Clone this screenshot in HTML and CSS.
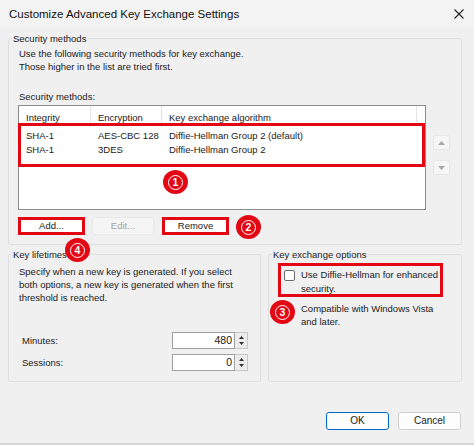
FILE: index.html
```html
<!DOCTYPE html>
<html lang="en">
<head>
    <meta charset="UTF-8">
    <title>Customize Advanced Key Exchange Settings</title>
    <link rel="stylesheet" href="styles.css">
</head>
<body>
    <div class="window">
        <div class="titlebar">
            <span class="title">Customize Advanced Key Exchange Settings</span>
            <svg class="close" width="10" height="10" viewBox="0 0 10 10">
                <path d="M0.5 0.5 L9.5 9.5 M9.5 0.5 L0.5 9.5" stroke="#222" stroke-width="1.1" fill="none"/>
            </svg>
        </div>
        <div class="content">
            <fieldset class="group group-methods">
                <legend>Security methods</legend>
                <div class="inner">
                    <p class="desc">Use the following security methods for key exchange.<br>Those higher in the list are tried first.</p>
                    <div class="list-label">Security methods:</div>
                    <div class="list-row">
                        <div class="list">
                            <div class="list-head">
                                <span class="col c1">Integrity</span>
                                <span class="col c2">Encryption</span>
                                <span class="col c3">Key exchange algorithm</span>
                            </div>
                            <div class="list-item">
                                <span class="col c1">SHA-1</span>
                                <span class="col c2">AES-CBC 128</span>
                                <span class="col c3">Diffie-Hellman Group 2 (default)</span>
                            </div>
                            <div class="list-item">
                                <span class="col c1">SHA-1</span>
                                <span class="col c2">3DES</span>
                                <span class="col c3">Diffie-Hellman Group 2</span>
                            </div>
                            <div class="mark-rows"></div>
                        </div>
                        <div class="movers">
                            <button class="mover">
                                <svg width="7" height="4" viewBox="0 0 7 4"><path d="M0 4 L3.5 0 L7 4 Z" fill="#a8a8a8"/></svg>
                            </button>
                            <button class="mover mover-down">
                                <svg width="7" height="4" viewBox="0 0 7 4"><path d="M0 0 L3.5 4 L7 0 Z" fill="#a8a8a8"/></svg>
                            </button>
                        </div>
                    </div>
                    <div class="actions">
                        <button class="btn marked btn-add">Add...</button>
                        <button class="btn btn-edit" disabled>Edit...</button>
                        <button class="btn marked btn-remove">Remove</button>
                    </div>
                </div>
            </fieldset>

            <div class="lower">
                <fieldset class="group group-life">
                    <legend>Key lifetimes</legend>
                    <div class="inner">
                        <p class="desc">Specify when a new key is generated. If you select<br>both options, a new key is generated when the first<br>threshold is reached.</p>
                        <div class="field">
                            <span class="field-label">Minutes:</span>
                            <div class="spin">
                                <span class="spin-value">480</span>
                                <span class="spin-btns">
                                    <svg width="5" height="3" viewBox="0 0 5 3"><path d="M0 3 L2.5 0 L5 3 Z" fill="#333"/></svg>
                                    <svg width="5" height="3" viewBox="0 0 5 3"><path d="M0 0 L2.5 3 L5 0 Z" fill="#333"/></svg>
                                </span>
                            </div>
                        </div>
                        <div class="field">
                            <span class="field-label">Sessions:</span>
                            <div class="spin">
                                <span class="spin-value">0</span>
                                <span class="spin-btns">
                                    <svg width="5" height="3" viewBox="0 0 5 3"><path d="M0 3 L2.5 0 L5 3 Z" fill="#333"/></svg>
                                    <svg width="5" height="3" viewBox="0 0 5 3"><path d="M0 0 L2.5 3 L5 0 Z" fill="#333"/></svg>
                                </span>
                            </div>
                        </div>
                    </div>
                </fieldset>

                <fieldset class="group group-options">
                    <legend>Key exchange options</legend>
                    <div class="inner">
                        <label class="check">
                            <span class="check-box"></span>
                            <span>Use Diffie-Hellman for enhanced<br>security.</span>
                        </label>
                        <p class="note">Compatible with Windows Vista<br>and later.</p>
                    </div>
                </fieldset>
            </div>

            <div class="footer">
                <button class="btn btn-ok">OK</button>
                <button class="btn btn-cancel">Cancel</button>
            </div>
        </div>

        <span class="badge badge-1"><span>1</span></span>
        <span class="badge badge-2"><span>2</span></span>
        <span class="badge badge-3"><span>3</span></span>
        <span class="badge badge-4"><span>4</span></span>
    </div>
</body>
</html>
```

FILE: styles.css
```css
body {
    margin: 0;
    font-family: 'Liberation Sans', Arial, sans-serif;
    font-size: 9.5px;
    color: #1a1a1a;
    background-color: #f0f0f0;
}

.window {
    position: relative;
    width: 474px;
    height: 445px;
    box-sizing: border-box;
    background-color: #f0f0f0;
    border-bottom: 2px solid #d6d6d6;
    overflow: hidden;
}

.titlebar {
    height: 28px;
    display: flex;
    align-items: center;
    justify-content: space-between;
    padding: 0 10px 0 9px;
    background-color: #f3f3f3;
}

.title {
    font-size: 11.5px;
    color: #111;
}

.close {
    display: block;
}

.content {
    padding: 0 12px 0 8px;
}

/* group boxes */
.group {
    margin: 0;
    padding: 0;
    border: 1px solid #dedede;
    border-radius: 2px;
    min-width: 0;
}

.group legend {
    margin-left: 3px;
    padding: 0 1px;
    line-height: 13px;
    color: #1a1a1a;
}

.desc,
.note {
    margin: 0;
    line-height: 13px;
}

.group-methods {
    margin-top: 4px;
}

.group-methods .inner {
    padding: 2px 0 9px 10px;
}

.list-label {
    margin-top: 17px;
    line-height: 13px;
}

.list-row {
    display: flex;
    align-items: flex-start;
    gap: 7px;
    margin-top: 2px;
    margin-left: -1px;
}

.list {
    position: relative;
    width: 408px;
    height: 105px;
    box-sizing: border-box;
    border: 1px solid #8c8c8c;
    background-color: #fff;
}

.list-head {
    display: flex;
    height: 21px;
    align-items: center;
}

.list-head .col {
    height: 21px;
    line-height: 23px;
    border-right: 1px solid #e5e5e5;
}

.list-item {
    display: flex;
    height: 14px;
    line-height: 14px;
}

.list-head + .list-item {
    margin-top: 2px;
}

.col {
    box-sizing: border-box;
    padding-left: 7px;
    white-space: nowrap;
}

.c1 { width: 72px; }
.c2 { width: 71px; }
.c3 { width: 255px; }

.mark-rows {
    position: absolute;
    left: -1px;
    top: 17px;
    width: 407px;
    height: 44px;
    box-sizing: border-box;
    border: 3.5px solid #e30613;
}

.movers {
    display: flex;
    flex-direction: column;
    gap: 10px;
    padding-top: 30px;
}

.mover {
    width: 17px;
    height: 15px;
    padding: 0;
    border: 1px solid #e6e6e6;
    border-radius: 2px;
    background-color: #f6f6f6;
    display: flex;
    align-items: center;
    justify-content: center;
}

.actions {
    display: flex;
    gap: 7px;
    margin-top: 7px;
    margin-left: -1px;
}

.btn {
    height: 18px;
    padding: 0;
    font-family: 'Liberation Sans', Arial, sans-serif;
    font-size: 9.5px;
    line-height: 12px;
    color: #1a1a1a;
    background-color: #fdfdfd;
    border: 1px solid #d0d0d0;
    border-radius: 3px;
}

.btn.marked {
    width: 67px;
    border: 3px solid #e30613;
    border-radius: 0;
    background-color: #fff;
}

.btn-edit {
    width: 62px;
    color: #a3a3a3;
    background-color: #f5f5f5;
    border-color: #e8e8e8;
}

.btn-remove {
    margin-left: 1px;
}

/* lower groups */
.lower {
    display: flex;
    gap: 7px;
    margin-top: 3px;
}

.group-life {
    width: 253px;
    box-sizing: border-box;
}

.group-life .inner {
    padding: 4px 12px 10px 10px;
}

.field {
    display: flex;
    align-items: center;
    justify-content: space-between;
    height: 17px;
    padding-left: 3px;
}

.field + .field {
    margin-top: 5px;
}

.desc + .field {
    margin-top: 28px;
}

.spin {
    display: flex;
    height: 17px;
}

.spin-value {
    width: 63px;
    box-sizing: border-box;
    border: 1px solid #a0a0a0;
    background-color: #fff;
    text-align: right;
    padding-right: 2px;
    line-height: 15px;
    font-size: 10.5px;
}

.spin-btns {
    width: 13px;
    box-sizing: border-box;
    border: 1px solid #c8c8c8;
    border-left: none;
    background-color: #ececec;
    display: flex;
    flex-direction: column;
    align-items: center;
    justify-content: space-around;
    padding: 1px 0;
}

.spin-btns svg {
    display: block;
}

.group-options {
    flex: 1;
}

.group-options .inner {
    padding: 2px 0 0 9px;
}

.check {
    display: flex;
    align-items: flex-start;
    gap: 6px;
    width: 165px;
    height: 34px;
    box-sizing: border-box;
    border: 3px solid #e30613;
    padding: 2px 0 0 3px;
    line-height: 13.5px;
}

.check-box {
    width: 11px;
    height: 11px;
    flex: none;
    box-sizing: border-box;
    margin-top: 2px;
    border: 1px solid #6a6a6a;
    border-radius: 2px;
    background-color: #fff;
}

.note {
    margin-top: 5px;
    padding-left: 23px;
}

.footer {
    display: flex;
    justify-content: flex-end;
    gap: 9px;
    margin-top: 30px;
    margin-right: 1px;
}

.btn-ok,
.btn-cancel {
    width: 63px;
    height: 18px;
    font-size: 10px;
}

.btn-ok {
    border: 1px solid #0067c0;
}

/* numbered callouts drawn over the dialog */
.badge {
    position: absolute;
    width: 25px;
    height: 24px;
    border-radius: 50%;
    background-color: #e30613;
    display: flex;
    align-items: center;
    justify-content: center;
}

.badge span {
    width: 15px;
    height: 15px;
    box-sizing: border-box;
    border: 1.8px solid #fff;
    border-radius: 50%;
    color: #fff;
    font-family: 'Liberation Sans', Arial, sans-serif;
    font-weight: bold;
    font-size: 10.5px;
    line-height: 12px;
    text-align: center;
}

.badge-1 { left: 163px; top: 170px; }
.badge-2 { left: 236px; top: 215px; }
.badge-3 { left: 270px; top: 300px; }
.badge-4 { left: 65px; top: 238px; }
```
